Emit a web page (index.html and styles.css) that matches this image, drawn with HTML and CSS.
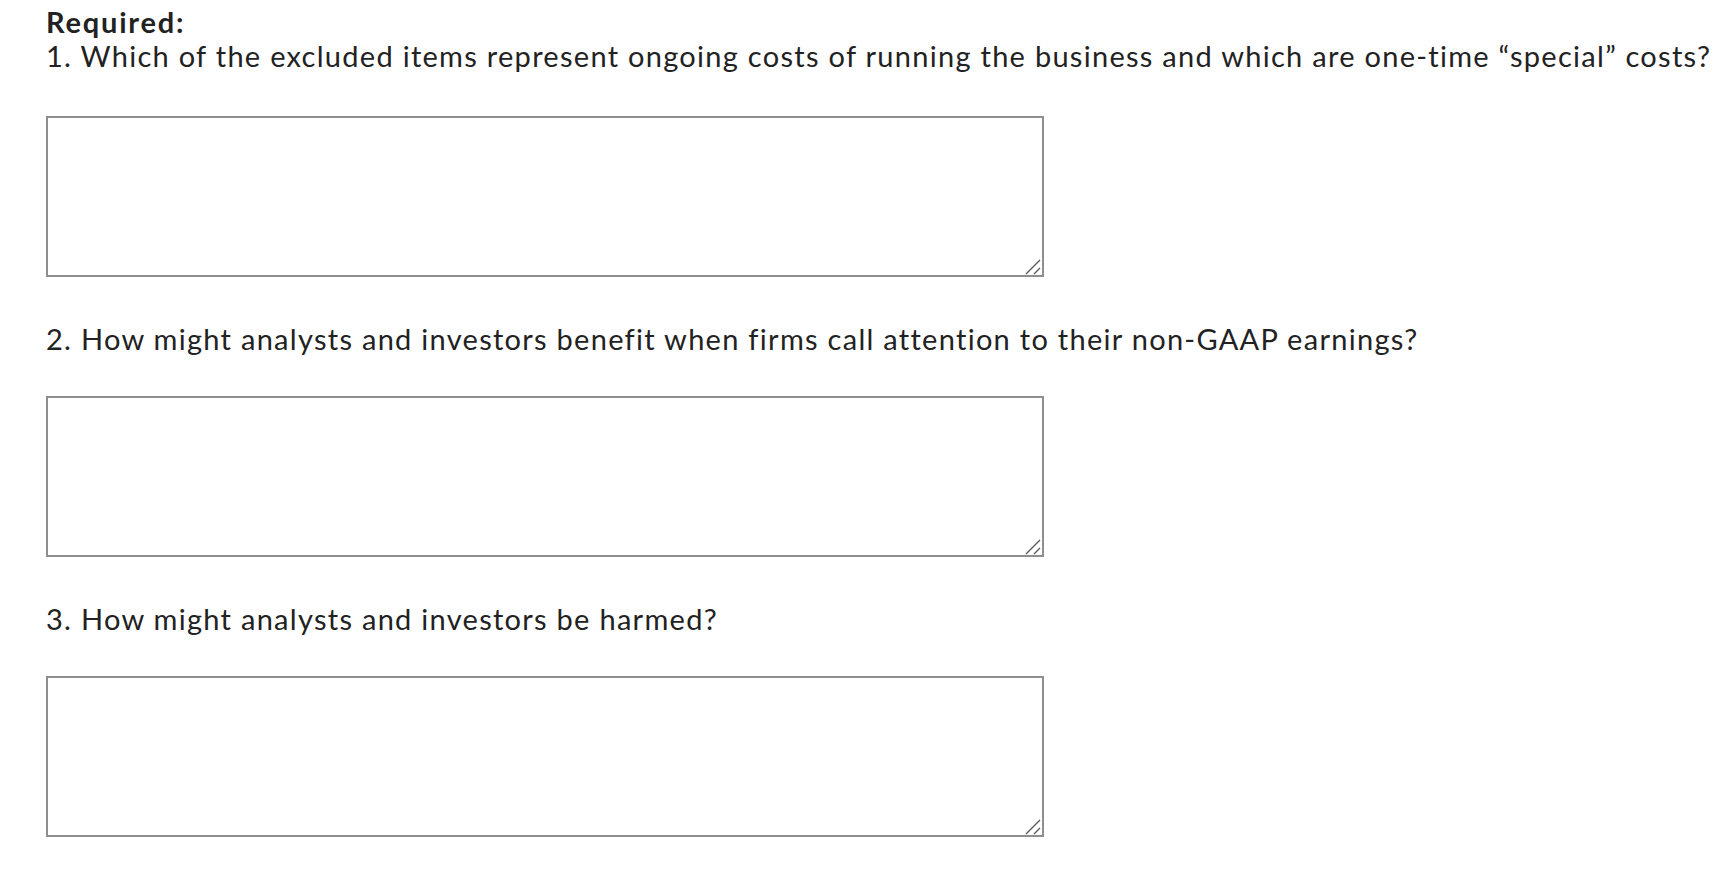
FILE: index.html
```html
<!DOCTYPE html>
<html>
<head>
<meta charset="utf-8">
<link rel="stylesheet" href="styles.css">
</head>
<body>
<main class="page">
  <div class="required">
    <div class="req-title">Required:</div>
    <p class="q first">1. Which of the excluded items represent ongoing costs of running the business and which are one-time “special” costs?</p>
  </div>
  <div class="field first-answer">
    <textarea class="answer"></textarea>
    <svg class="grip" width="16" height="16" viewBox="0 0 16 16"><path d="M1 15 L15 1 M9 15 L15 9" stroke="#5a5a5a" stroke-width="1.4" fill="none"/></svg>
  </div>
  <p class="q">2. How might analysts and investors benefit when firms call attention to their non-GAAP earnings?</p>
  <div class="field">
    <textarea class="answer"></textarea>
    <svg class="grip" width="16" height="16" viewBox="0 0 16 16"><path d="M1 15 L15 1 M9 15 L15 9" stroke="#5a5a5a" stroke-width="1.4" fill="none"/></svg>
  </div>
  <p class="q">3. How might analysts and investors be harmed?</p>
  <div class="field">
    <textarea class="answer"></textarea>
    <svg class="grip" width="16" height="16" viewBox="0 0 16 16"><path d="M1 15 L15 1 M9 15 L15 9" stroke="#5a5a5a" stroke-width="1.4" fill="none"/></svg>
  </div>
</main>
</body>
</html>
```

FILE: styles.css
```css
html, body {
  margin: 0;
  padding: 0;
  background: #ffffff;
}
.page {
  padding: 5px 0 0 46px;
  font-family: "Lato", "Liberation Sans", sans-serif;
  font-size: 29px;
  line-height: 34px;
  letter-spacing: 1.28px;
  font-variant-ligatures: none;
  color: #222222;
  display: flex;
  flex-direction: column;
  align-items: flex-start;
}
.req-title {
  font-weight: 700;
  letter-spacing: 1.8px;
}
.q {
  margin: 45px 0 40px 0;
  white-space: nowrap;
}
.q.first {
  margin: 0;
}
.field {
  position: relative;
  width: 998px;
  height: 161px;
}
.first-answer {
  margin-top: 43px;
}
.answer {
  display: block;
  box-sizing: border-box;
  width: 100%;
  height: 100%;
  margin: 0;
  padding: 4px;
  border: 2px solid #8e8e8e;
  border-radius: 0;
  background: #ffffff;
  font-family: "Lato", sans-serif;
  font-size: 16px;
  resize: none;
  outline: none;
}
.grip {
  position: absolute;
  right: 3px;
  bottom: 2px;
}
```
